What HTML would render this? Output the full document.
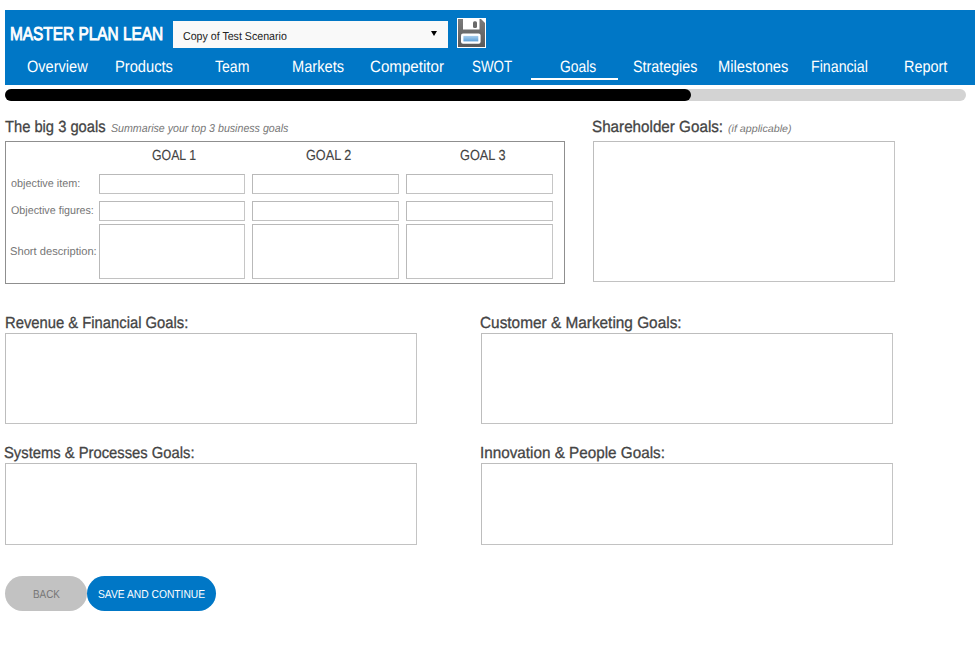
<!DOCTYPE html>
<html><head><meta charset="utf-8">
<style>
html,body{margin:0;padding:0;background:#fff;}
body{width:975px;height:651px;overflow:hidden;position:relative;font-family:"Liberation Sans",sans-serif;}
.a{position:absolute;box-sizing:border-box;}
.t{position:absolute;white-space:nowrap;transform-origin:0 0;text-rendering:geometricPrecision;}
.s{-webkit-text-stroke:0.3px currentColor;}
.s2{-webkit-text-stroke:0.15px currentColor;}
.s3{-webkit-text-stroke:0.9px currentColor;}
.hdr{left:5px;top:10px;width:970px;height:75px;background:#0077c6;}
.dd{left:173px;top:21px;width:274.5px;height:27px;background:#f9f9f9;}
.arr{left:431px;top:31px;width:0;height:0;border-left:3.5px solid transparent;border-right:3.5px solid transparent;border-top:5px solid #000;}
.ul{left:531px;top:78px;width:87px;height:2px;background:#fff;}
.pg{left:5px;top:89px;width:961px;height:12px;border-radius:6px;background:#d3d3d3;}
.pb{left:5px;top:89px;width:686px;height:12px;border-radius:6px;background:#000;}
.tbl{left:5px;top:141px;width:560px;height:143px;border:1px solid #8f8f8f;}
.in{border:1px solid #b9b9b9;border-right-color:#c6c6c6;border-bottom-color:#c2c2c2;background:#fff;}
.box{border:1px solid #bdbdbd;border-right-color:#c4c4c4;border-bottom-color:#c2c2c2;background:#fff;}
.btn{border-radius:17.5px;}
</style></head><body>
<div class="a hdr"></div>
<div class="a dd"></div>
<div class="a arr"></div>
<svg class="a" style="left:457px;top:18px" width="29" height="30" viewBox="0 0 29 30">
  <defs>
    <linearGradient id="gb" x1="0" y1="0" x2="0" y2="1"><stop offset="0" stop-color="#a8cdec"/><stop offset="1" stop-color="#5d9fd6"/></linearGradient>
    <linearGradient id="gg" x1="0" y1="0" x2="0" y2="1"><stop offset="0" stop-color="#7a7a7a"/><stop offset="1" stop-color="#5a5a5a"/></linearGradient>
  </defs>
  <rect x="0" y="0" width="29" height="30" fill="#fff"/>
  <path d="M1,1 H24 L28,5 V29 H1 Z" fill="url(#gg)"/>
  <rect x="6" y="1" width="16.5" height="10.5" fill="#fff"/>
  <rect x="16" y="3.3" width="4" height="6.7" rx="1.5" fill="#6a6a6a"/>
  <rect x="4" y="15.6" width="19.6" height="10.2" rx="2" fill="#fff"/>
  <rect x="6.4" y="17.9" width="14.9" height="5.5" fill="url(#gb)"/>
</svg>
<div class="a ul"></div>
<div class="a pg"></div>
<div class="a pb"></div>

<div class="a tbl"></div>
<div class="a in" style="left:99px;top:174px;width:146px;height:20px"></div>
<div class="a in" style="left:252px;top:174px;width:147px;height:20px"></div>
<div class="a in" style="left:406px;top:174px;width:147px;height:20px"></div>
<div class="a in" style="left:99px;top:201px;width:146px;height:20px"></div>
<div class="a in" style="left:252px;top:201px;width:147px;height:20px"></div>
<div class="a in" style="left:406px;top:201px;width:147px;height:20px"></div>
<div class="a in" style="left:99px;top:224px;width:146px;height:55px"></div>
<div class="a in" style="left:252px;top:224px;width:147px;height:55px"></div>
<div class="a in" style="left:406px;top:224px;width:147px;height:55px"></div>

<div class="a box" style="left:593px;top:141px;width:302px;height:141px"></div>
<div class="a box" style="left:5px;top:333px;width:412px;height:91px"></div>
<div class="a box" style="left:481px;top:333px;width:412px;height:91px"></div>
<div class="a box" style="left:5px;top:463px;width:412px;height:82px"></div>
<div class="a box" style="left:481px;top:463px;width:412px;height:82px"></div>

<div class="a btn" style="left:5px;top:576px;width:82px;height:35px;background:#c2c2c2"></div>
<div class="a btn" style="left:87px;top:576px;width:128.5px;height:35px;background:#0077c6"></div>
<div class="t s3" style="left:9.77px;top:25.45px;font-size:18.60px;line-height:18.60px;font-weight:normal;font-style:normal;color:#ffffff;transform:scaleX(0.8279)">MASTER PLAN LEAN</div>
<div class="t" style="left:182.70px;top:32.08px;font-size:11.48px;line-height:11.48px;font-weight:normal;font-style:normal;color:#222;transform:scaleX(0.9268)">Copy of Test Scenario</div>
<div class="t" style="left:26.81px;top:58.89px;font-size:16.42px;line-height:16.42px;font-weight:normal;font-style:normal;color:#ffffff;transform:scaleX(0.8881)">Overview</div>
<div class="t" style="left:115.00px;top:58.89px;font-size:16.42px;line-height:16.42px;font-weight:normal;font-style:normal;color:#ffffff;transform:scaleX(0.8952)">Products</div>
<div class="t" style="left:214.80px;top:58.89px;font-size:16.42px;line-height:16.42px;font-weight:normal;font-style:normal;color:#ffffff;transform:scaleX(0.8564)">Team</div>
<div class="t" style="left:291.81px;top:58.89px;font-size:16.42px;line-height:16.42px;font-weight:normal;font-style:normal;color:#ffffff;transform:scaleX(0.8930)">Markets</div>
<div class="t" style="left:369.78px;top:58.89px;font-size:16.42px;line-height:16.42px;font-weight:normal;font-style:normal;color:#ffffff;transform:scaleX(0.9215)">Competitor</div>
<div class="t" style="left:471.78px;top:58.89px;font-size:16.42px;line-height:16.42px;font-weight:normal;font-style:normal;color:#ffffff;transform:scaleX(0.8167)">SWOT</div>
<div class="t" style="left:560.15px;top:58.89px;font-size:16.42px;line-height:16.42px;font-weight:normal;font-style:normal;color:#ffffff;transform:scaleX(0.8452)">Goals</div>
<div class="t" style="left:632.93px;top:58.89px;font-size:16.42px;line-height:16.42px;font-weight:normal;font-style:normal;color:#ffffff;transform:scaleX(0.8712)">Strategies</div>
<div class="t" style="left:717.70px;top:58.89px;font-size:16.42px;line-height:16.42px;font-weight:normal;font-style:normal;color:#ffffff;transform:scaleX(0.8974)">Milestones</div>
<div class="t" style="left:811.03px;top:58.89px;font-size:16.42px;line-height:16.42px;font-weight:normal;font-style:normal;color:#ffffff;transform:scaleX(0.8656)">Financial</div>
<div class="t" style="left:904.42px;top:58.89px;font-size:16.42px;line-height:16.42px;font-weight:normal;font-style:normal;color:#ffffff;transform:scaleX(0.8776)">Report</div>
<div class="t s" style="left:5.40px;top:119.04px;font-size:16.13px;line-height:16.13px;font-weight:normal;font-style:normal;color:#444;transform:scaleX(0.9127)">The big 3 goals</div>
<div class="t" style="left:110.60px;top:124.08px;font-size:11.48px;line-height:11.48px;font-weight:normal;font-style:italic;color:#777;transform:scaleX(0.9272)">Summarise your top 3 business goals</div>
<div class="t s2" style="left:152.35px;top:148.79px;font-size:14.53px;line-height:14.53px;font-weight:normal;font-style:normal;color:#444;transform:scaleX(0.8480)">GOAL 1</div>
<div class="t s2" style="left:306.23px;top:148.79px;font-size:14.53px;line-height:14.53px;font-weight:normal;font-style:normal;color:#444;transform:scaleX(0.8720)">GOAL 2</div>
<div class="t s2" style="left:460.02px;top:148.79px;font-size:14.53px;line-height:14.53px;font-weight:normal;font-style:normal;color:#444;transform:scaleX(0.8780)">GOAL 3</div>
<div class="t" style="left:10.70px;top:179.22px;font-size:11.19px;line-height:11.19px;font-weight:normal;font-style:normal;color:#767676;transform:scaleX(0.9690)">objective item:</div>
<div class="t" style="left:10.50px;top:206.42px;font-size:11.19px;line-height:11.19px;font-weight:normal;font-style:normal;color:#767676;transform:scaleX(0.9581)">Objective figures:</div>
<div class="t" style="left:9.52px;top:247.20px;font-size:11.34px;line-height:11.34px;font-weight:normal;font-style:normal;color:#767676;transform:scaleX(0.9837)">Short description:</div>
<div class="t s" style="left:592.46px;top:119.04px;font-size:16.13px;line-height:16.13px;font-weight:normal;font-style:normal;color:#444;transform:scaleX(0.9445)">Shareholder Goals:</div>
<div class="t" style="left:727.80px;top:124.86px;font-size:10.32px;line-height:10.32px;font-weight:normal;font-style:italic;color:#777;transform:scaleX(1.0361)">(if applicable)</div>
<div class="t s" style="left:4.98px;top:314.54px;font-size:16.13px;line-height:16.13px;font-weight:normal;font-style:normal;color:#444;transform:scaleX(0.9182)">Revenue &amp; Financial Goals:</div>
<div class="t s" style="left:480.35px;top:314.54px;font-size:16.13px;line-height:16.13px;font-weight:normal;font-style:normal;color:#444;transform:scaleX(0.9541)">Customer &amp; Marketing Goals:</div>
<div class="t s" style="left:4.08px;top:445.66px;font-size:15.99px;line-height:15.99px;font-weight:normal;font-style:normal;color:#444;transform:scaleX(0.9245)">Systems &amp; Processes Goals:</div>
<div class="t s" style="left:480.35px;top:445.66px;font-size:15.99px;line-height:15.99px;font-weight:normal;font-style:normal;color:#444;transform:scaleX(0.9547)">Innovation &amp; People Goals:</div>
<div class="t" style="left:32.84px;top:590.08px;font-size:11.48px;line-height:11.48px;font-weight:normal;font-style:normal;color:#777;transform:scaleX(0.8633)">BACK</div>
<div class="t" style="left:97.70px;top:590.08px;font-size:11.48px;line-height:11.48px;font-weight:normal;font-style:normal;color:#ffffff;transform:scaleX(0.8958)">SAVE AND CONTINUE</div>
</body></html>
